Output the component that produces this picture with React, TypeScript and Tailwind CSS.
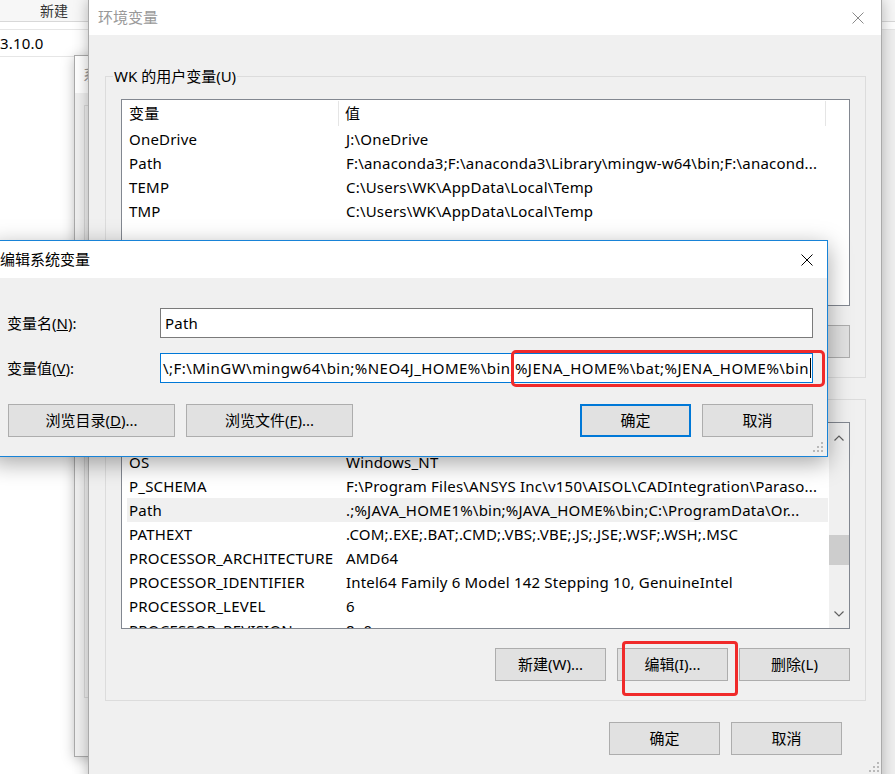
import React from "react";

type Row = [string, string, boolean?];

const userRows: Row[] = [
  ["OneDrive", "J:\\OneDrive"],
  ["Path", "F:\\anaconda3;F:\\anaconda3\\Library\\mingw-w64\\bin;F:\\anacond..."],
  ["TEMP", "C:\\Users\\WK\\AppData\\Local\\Temp"],
  ["TMP", "C:\\Users\\WK\\AppData\\Local\\Temp"],
];

const sysRows: Row[] = [
  ["OS", "Windows_NT"],
  ["P_SCHEMA", "F:\\Program Files\\ANSYS Inc\\v150\\AISOL\\CADIntegration\\Paraso..."],
  ["Path", ".;%JAVA_HOME1%\\bin;%JAVA_HOME%\\bin;C:\\ProgramData\\Or...", true],
  ["PATHEXT", ".COM;.EXE;.BAT;.CMD;.VBS;.VBE;.JS;.JSE;.WSF;.WSH;.MSC"],
  ["PROCESSOR_ARCHITECTURE", "AMD64"],
  ["PROCESSOR_IDENTIFIER", "Intel64 Family 6 Model 142 Stepping 10, GenuineIntel"],
  ["PROCESSOR_LEVEL", "6"],
  ["PROCESSOR_REVISION", "8e0a"],
];

function CloseX({ color }: { color: string }) {
  return (
    <svg width="12" height="12" viewBox="0 0 12 12">
      <path d="M0.5 0.5L11.5 11.5M11.5 0.5L0.5 11.5" stroke={color} strokeWidth="1" fill="none" />
    </svg>
  );
}

function Grip() {
  return (
    <svg width="11" height="11" viewBox="0 0 11 11">
      <g fill="#b9b9b9">
        <rect x="8" y="0" width="2" height="2" />
        <rect x="4" y="4" width="2" height="2" />
        <rect x="8" y="4" width="2" height="2" />
        <rect x="0" y="8" width="2" height="2" />
        <rect x="4" y="8" width="2" height="2" />
        <rect x="8" y="8" width="2" height="2" />
      </g>
    </svg>
  );
}

function Btn({ children, w = "w-[111px]", primary }: { children: React.ReactNode; w?: string; primary?: boolean }) {
  return (
    <button
      type="button"
      className={`${w} h-[33px] bg-[#e1e1e1] text-[15px] text-black ${
        primary ? "border-2 border-[#0078d7]" : "border border-[#adadad]"
      }`}
    >
      {children}
    </button>
  );
}

function ListView({ rows, scroll }: { rows: Row[]; scroll?: boolean }) {
  return (
    <div className="flex h-[207px] w-[729px] overflow-hidden border border-[#828790] bg-white tracking-[0.2px]">
      <div className="min-w-0 flex-1">
        <div className="flex h-[27px] items-center">
          <div className="flex h-[25px] w-[217px] items-center border-r border-[#e5e5e5] pl-[7px]">变量</div>
          <div className="flex h-[25px] w-[487px] items-center border-r border-[#e5e5e5] pl-[6px]">值</div>
        </div>
        {rows.map(([name, value, sel]) => (
          <div
            key={name}
            className={`ml-[5px] mr-[1px] flex h-[24px] items-center whitespace-nowrap ${sel ? "bg-[#f0f0f0]" : ""}`}
          >
            <div className="w-[212px] shrink-0 overflow-hidden pl-[2px]">{name}</div>
            <div className="min-w-0 flex-1 overflow-hidden pl-[7px]">{value}</div>
          </div>
        ))}
      </div>
      {scroll && (
        <div className="relative flex w-[20px] shrink-0 flex-col items-center bg-[#f0f0f0]">
          <svg width="20" height="28" viewBox="0 0 20 28">
            <path d="M5.5 17.5L10 13L14.5 17.5" stroke="#606060" strokeWidth="1.2" fill="none" />
          </svg>
          <div className="absolute left-0 top-[112px] h-[30px] w-[20px] bg-[#cdcdcd]" />
          <svg className="absolute bottom-0 left-0" width="20" height="24" viewBox="0 0 20 24">
            <path d="M5.5 7.5L10 12L14.5 7.5" stroke="#606060" strokeWidth="1.2" fill="none" />
          </svg>
        </div>
      )}
    </div>
  );
}

function Group({
  label,
  rows,
  scroll,
  buttons,
  className,
}: {
  label: string;
  rows: Row[];
  scroll?: boolean;
  buttons: string[];
  className: string;
}) {
  return (
    <fieldset className={`border border-[#dcdcdc] pb-[19px] ${className}`}>
      <legend className="ml-[7px] px-[1px] text-[15px] leading-[20px]">{label}</legend>
      <div className="mt-[13px] pl-[15px]">
        <ListView rows={rows} scroll={scroll} />
        <div className="mt-[19px] flex w-[729px] justify-end gap-[11px]">
          {buttons.map((b) => (
            <Btn key={b} w="w-[111px]">
              {b}
            </Btn>
          ))}
        </div>
      </div>
    </fieldset>
  );
}

export default function App() {
  return (
    <div className="relative h-[774px] w-[895px] overflow-hidden bg-white font-['Noto_Sans','Noto_Sans_CJK_SC',sans-serif] text-[15px] text-black">
      {/* page behind */}
      <div className="h-[22px] border-b border-[#d8d8d8] bg-[#f7f7f7] pl-[40px] text-[14px] leading-[21px] text-[#333]">新建</div>
      <div className="h-[8px] border-b border-[#e6e6e6]" />
      <div className="h-[27px] border-b border-[#e6e6e6] text-[15px] leading-[26px] tracking-[0.2px]">3.10.0</div>
      <div className="absolute right-0 top-[30px] h-[744px] w-[20px] bg-[#f0f0f0]" />

      {/* 系统属性 window (behind) */}
      <div className="absolute left-[74px] top-[55px] h-[702px] w-[300px] border border-[#aaaaaa] bg-[#f0f0f0] shadow-[0_2px_12px_rgba(0,0,0,0.25)]">
        <div className="flex h-[37px] items-center bg-white pl-[8px] text-[#999]">系统属性</div>
        <div className="ml-[9px] mt-[12px] h-[593px] border border-[#d9d9d9] bg-[#f0f0f0]" />
      </div>

      {/* 环境变量 window */}
      <div className="absolute left-[88px] top-0 h-[800px] w-[794px] border-x border-[#aaaaaa] bg-[#f0f0f0] shadow-[0_0_14px_rgba(0,0,0,0.28)]">
        <div className="flex h-[35px] items-center justify-between bg-white pl-[9px] pr-[17px]">
          <span className="text-[#999]">环境变量</span>
          <CloseX color="#8a8a8a" />
        </div>
        <div className="pl-[16px] pr-[15px]">
          <Group
            className="mt-[31px]"
            label="WK 的用户变量(U)"
            rows={userRows}
            buttons={["新建(N)...", "编辑(E)...", "删除(D)"]}
          />
          <Group
            className="mt-[11px]"
            label="系统变量(S)"
            rows={sysRows}
            scroll
            buttons={["新建(W)...", "编辑(I)...", "删除(L)"]}
          />
          <div className="mt-[21px] flex justify-end gap-[11px] pr-[24px]">
            <Btn>确定</Btn>
            <Btn>取消</Btn>
          </div>
        </div>
        <div className="absolute left-[533px] top-[641px] h-[55px] w-[116px] rounded-[4px] border-[3px] border-[#f02a2a]" />
        <div className="absolute left-[780px] top-[762px]">
          <Grip />
        </div>
      </div>

      {/* 编辑系统变量 dialog */}
      <div className="absolute left-[-9px] top-[240px] h-[217px] w-[837px] border border-[#1883d7] bg-[#f0f0f0] shadow-[0_6px_22px_rgba(0,0,0,0.35)]">
        <div className="flex h-[37px] items-center justify-between bg-white pl-[8px] pr-[14px]">
          <span>编辑系统变量</span>
          <CloseX color="#000" />
        </div>
        <div className="pr-[14px] pt-[30px]">
          <div className="flex items-center">
            <div className="w-[168px] pl-[15px]">
              变量名(<span className="underline">N</span>):
            </div>
            <div className="flex h-[30px] flex-1 items-center border border-[#7a7a7a] bg-white pl-[4px] tracking-[0.2px]">Path</div>
          </div>
          <div className="mt-[15px] flex items-center">
            <div className="w-[168px] pl-[15px]">
              变量值(<span className="underline">V</span>):
            </div>
            <div className="flex h-[30px] flex-1 items-center overflow-hidden whitespace-nowrap border border-[#0078d7] bg-white pl-[2px]">
              <span className="tracking-[0.45px]">\;F:\MinGW\mingw64\bin;%NEO4J_HOME%\bin;%JENA_HOME%\bat;%JENA_HOME%\bin</span>
              <span className="ml-[1px] inline-block h-[20px] w-[1px] bg-black" />
            </div>
          </div>
          <div className="mt-[21px] flex items-center pl-[16px]">
            <Btn w="w-[167px]">
              浏览目录(<span className="underline">D</span>)...
            </Btn>
            <div className="ml-[11px]">
              <Btn w="w-[167px]">
                浏览文件(<span className="underline">F</span>)...
              </Btn>
            </div>
            <div className="ml-auto flex gap-[11px]">
              <Btn primary>确定</Btn>
              <Btn>取消</Btn>
            </div>
          </div>
        </div>
        <div className="absolute left-[519px] top-[109px] h-[37px] w-[314px] rounded-[5px] border-[3px] border-[#f02a2a]" />
        <div className="absolute bottom-[3px] right-[3px]">
          <Grip />
        </div>
      </div>
    </div>
  );
}
